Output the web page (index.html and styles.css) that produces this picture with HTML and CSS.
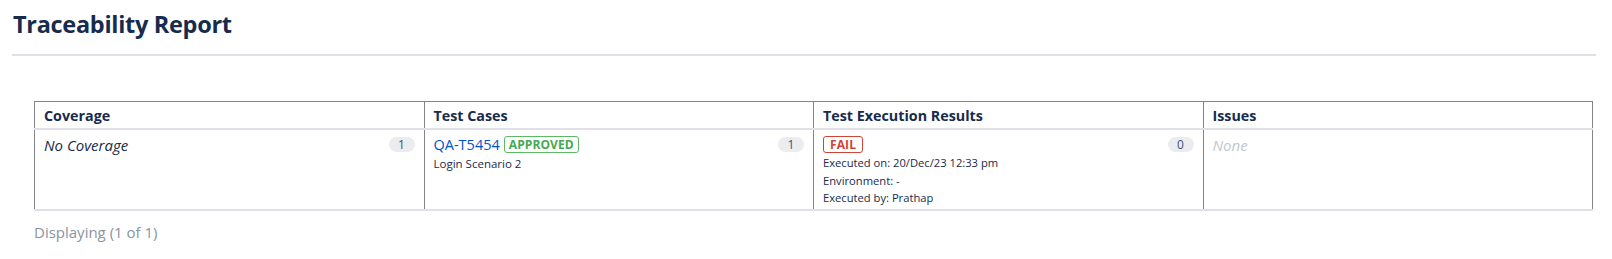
FILE: index.html
```html
<!DOCTYPE html>
<html>
<head>
<meta charset="utf-8">
<link rel="stylesheet" href="styles.css">
</head>
<body>
<div class="page">
  <header class="page-header">
    <h1 class="title">Traceability Report</h1>
  </header>
  <div class="report">
    <table class="trace">
      <thead>
        <tr>
          <th>Coverage</th>
          <th>Test Cases</th>
          <th>Test Execution Results</th>
          <th>Issues</th>
        </tr>
      </thead>
      <tbody>
        <tr>
          <td>
            <div class="cell">
              <div class="cell-main"><span class="muted-italic">No Coverage</span></div>
              <span class="count">1</span>
            </div>
          </td>
          <td>
            <div class="cell">
              <div class="cell-main">
                <div class="tc-line"><a class="key">QA-T5454</a><span class="lozenge ok">APPROVED</span></div>
                <div class="small">Login Scenario 2</div>
              </div>
              <span class="count">1</span>
            </div>
          </td>
          <td>
            <div class="cell">
              <div class="cell-main">
                <div class="tc-line"><span class="lozenge fail">FAIL</span></div>
                <div class="small meta">Executed on: 20/Dec/23 12:33 pm</div>
                <div class="small meta">Environment: -</div>
                <div class="small meta">Executed by: Prathap</div>
              </div>
              <span class="count">0</span>
            </div>
          </td>
          <td>
            <div class="cell">
              <div class="cell-main"><span class="none">None</span></div>
            </div>
          </td>
        </tr>
      </tbody>
    </table>
    <div class="footer-note">Displaying (1 of 1)</div>
  </div>
</div>
</body>
</html>
```

FILE: styles.css
```css
html, body {
  margin: 0;
  padding: 0;
  background: #ffffff;
}
body {
  font-family: "Open Sans", "Noto Sans", "Liberation Sans", sans-serif;
  color: #172b4d;
  font-size: 14px;
}
.page {
  padding: 0 16px 0 12px;
}
.page-header {
  border-bottom: 2px solid #dfe1e6;
  padding: 7px 0 12px 1px;
}
.title {
  margin: 0;
  font-size: 23.5px;
  line-height: 35px;
  font-weight: 700;
  color: #172b4d;
  letter-spacing: -0.3px;
}
.report {
  padding: 45px 3px 0 22px;
}
.trace {
  width: 100%;
  border-collapse: collapse;
  table-layout: fixed;
}
.trace th {
  text-align: left;
  font-weight: 700;
  font-size: 14.3px;
  color: #172b4d;
  height: 26px;
  padding: 0 9px;
  border-top: 1px solid #858585;
  border-left: 1px solid #858585;
  border-right: 1px solid #858585;
  border-bottom: 2px solid #dfe1e6;
  vertical-align: middle;
}
.trace td {
  vertical-align: top;
  padding: 5px 9px 2px 9px;
  height: 71px;
  border-left: 1px solid #858585;
  border-right: 1px solid #858585;
  border-bottom: 2px solid #dfe1e6;
}
.cell {
  display: flex;
  justify-content: space-between;
  align-items: flex-start;
}
.cell-main {
  display: flex;
  flex-direction: column;
}
.muted-italic {
  font-style: italic;
  font-size: 15px;
  line-height: 20px;
}
.none {
  font-style: italic;
  font-size: 15px;
  line-height: 20px;
  color: #c1c7d0;
}
.count {
  background: #ebecf0;
  color: #42526e;
  font-size: 12px;
  line-height: 15px;
  min-width: 26px;
  text-align: center;
  border-radius: 8px;
  margin-top: 2px;
}
.tc-line {
  display: flex;
  align-items: center;
  gap: 4px;
  height: 19px;
}
.key {
  color: #0052cc;
  font-size: 14.5px;
  text-decoration: none;
}
.lozenge {
  display: inline-block;
  font-size: 12px;
  font-weight: 700;
  line-height: 15px;
  padding: 0 4px;
  border-radius: 3px;
  background: #ffffff;
  letter-spacing: 0.1px;
}
.lozenge.ok {
  color: #45a94f;
  border: 1px solid #5eb865;
}
.lozenge.fail {
  color: #d04437;
  border: 1px solid #d04437;
  padding: 0 6px;
}
.small {
  font-size: 11.5px;
  line-height: 17px;
  color: #172b4d;
  margin-top: 1px;
}
.meta {
  font-size: 11.2px;
  line-height: 17.5px;
  margin-top: 0;
}
.footer-note {
  margin-top: 11px;
  color: #8993a4;
  font-size: 15px;
}
```
